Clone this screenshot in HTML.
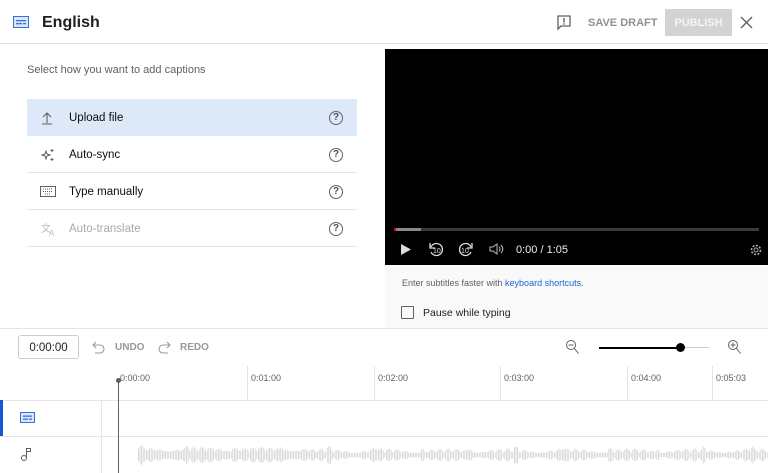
<!DOCTYPE html>
<html><head><meta charset="utf-8"><style>
*{box-sizing:border-box;margin:0;padding:0}
body{width:768px;height:473px;overflow:hidden;background:#fff;font-family:"Liberation Sans",sans-serif;position:relative;color:#0d0d0d}
.abs{position:absolute}
.hdr{left:0;top:0;width:768px;height:44px;border-bottom:1px solid #e0e0e0}
.title{left:42px;top:14px;font-size:16px;font-weight:bold;color:#202020}
.sub{left:27px;top:64px;font-size:11px;color:#606060}
.row{left:27px;width:330px;height:37px;border-bottom:1px solid #e5e5e5;font-size:11.5px}
.row span{position:absolute;left:42px;top:13px}
.q{position:absolute;left:302px;top:12px;width:14px;height:14px;border:1.3px solid #606060;border-radius:50%;font-size:10px;text-align:center;line-height:12px;color:#505050;font-weight:bold}
.ic{position:absolute;left:14px;top:12px}
.video{left:385px;top:49px;width:383px;height:216px;background:#000}
.panel{left:385px;top:265px;width:383px;height:63px;background:#f9f9f9}
.tb{left:0;top:328px;width:768px;border-top:1px solid #e5e5e5}
.tick{position:absolute;top:366px;height:34px;border-left:1px solid #e5e5e5;font-size:9px;color:#606060;padding-left:3px;padding-top:7px}
</style></head><body>
<div class="abs hdr"></div>
<svg class="abs" style="left:13px;top:16px" width="16" height="12"><rect x="0.5" y="0.5" width="15" height="11" fill="#dbe6fb" stroke="#3a6fd8"/><rect x="3" y="4" width="10" height="1.3" fill="#3a6fd8"/><rect x="3" y="7" width="6" height="1.3" fill="#3a6fd8"/><rect x="10" y="7" width="3" height="1.3" fill="#3a6fd8"/></svg>
<div class="abs title">English</div>
<svg class="abs" style="left:557px;top:15px" width="14" height="16"><path d="M1 1h12v10H4l-3 3z" fill="none" stroke="#606060" stroke-width="1.3"/><rect x="6.3" y="3" width="1.4" height="4.5" fill="#606060"/><rect x="6.3" y="8.3" width="1.4" height="1.4" fill="#606060"/></svg>
<div class="abs" style="left:588px;top:17px;font-size:11px;font-weight:bold;color:#909090">SAVE DRAFT</div>
<div class="abs" style="left:665px;top:9px;width:67px;height:27px;background:#d3d3d3;color:#f4f4f4;font-size:11px;font-weight:bold;text-align:center;line-height:28px">PUBLISH</div>
<svg class="abs" style="left:740px;top:16px" width="13" height="13"><path d="M1 1l11 11M12 1L1 12" stroke="#606060" stroke-width="1.4"/></svg>

<div class="abs sub">Select how you want to add captions</div>
<div class="abs row" style="top:99px;background:#dde8f9;border-bottom-color:#dde8f9"><svg class="ic" width="12" height="14"><path d="M6 12V2M2 6l4-4 4 4M1 13h10" fill="none" stroke="#606060" stroke-width="1.1"/></svg><span>Upload file</span><div class="q">?</div></div>
<div class="abs row" style="top:136px"><svg class="ic" width="14" height="14"><path d="M5 3l1 3 3 1-3 1-1 3-1-3-3-1 3-1zM11 1v3M9.5 2.5h3M11 10v3M9.5 11.5h3" fill="none" stroke="#606060" stroke-width="1"/></svg><span>Auto-sync</span><div class="q">?</div></div>
<div class="abs row" style="top:173px"><svg class="ic" width="16" height="12" style="left:13px;top:13px"><rect x="0.5" y="0.5" width="15" height="10" fill="none" stroke="#606060"/><path d="M3 3h10M3 5.5h10M5 8h6" stroke="#606060" stroke-dasharray="1 1"/></svg><span>Type manually</span><div class="q">?</div></div>
<div class="abs row" style="top:210px"><svg class="ic" width="16" height="14"><text x="0" y="10" font-size="10" fill="#bbb" font-family="Liberation Sans">文</text><text x="8" y="14" font-size="8" fill="#bbb" font-family="Liberation Sans">A</text></svg><span style="color:#aaa">Auto-translate</span><div class="q">?</div></div>

<div class="abs video"></div>
<div class="abs" style="left:394px;top:228px;width:365px;height:3px;background:#3a3a3a"></div>
<div class="abs" style="left:394px;top:228px;width:27px;height:3px;background:#888"></div>
<div class="abs" style="left:394px;top:228px;width:2px;height:3px;background:#e00"></div>
<svg class="abs" style="left:400px;top:243px" width="12" height="13"><path d="M1 1l10 5.5L1 12z" fill="#ddd"/></svg>
<svg class="abs" style="left:428px;top:241px" width="16" height="16"><path d="M3 6a6 6 0 1 1 0 5" fill="none" stroke="#ddd" stroke-width="1.3"/><path d="M2 2v5h5" fill="none" stroke="#ddd" stroke-width="1.3"/><text x="5" y="12" font-size="7" fill="#ddd" font-family="Liberation Sans">10</text></svg>
<svg class="abs" style="left:458px;top:241px" width="16" height="16"><path d="M13 6a6 6 0 1 0 0 5" fill="none" stroke="#ddd" stroke-width="1.3"/><path d="M14 2v5H9" fill="none" stroke="#ddd" stroke-width="1.3"/><text x="3" y="12" font-size="7" fill="#ddd" font-family="Liberation Sans">10</text></svg>
<svg class="abs" style="left:489px;top:242px" width="16" height="14"><path d="M1 5h3l4-3v10L4 9H1z" fill="none" stroke="#bbb"/><path d="M10 4.5q2 2.5 0 5M12 3q3.5 4 0 8" fill="none" stroke="#bbb"/></svg>
<div class="abs" style="left:516px;top:244px;font-size:11px;color:#eee">0:00 / 1:05</div>
<svg class="abs" style="left:749px;top:243px" width="14" height="14"><circle cx="7" cy="7" r="4.5" fill="none" stroke="#aaa" stroke-width="1.6" stroke-dasharray="2 1.5"/><circle cx="7" cy="7" r="2" fill="none" stroke="#aaa"/></svg>

<div class="abs panel"></div>
<div class="abs" style="left:402px;top:278px;font-size:9px;color:#606060">Enter subtitles faster with <span style="color:#1a66d8">keyboard shortcuts</span>.</div>
<div class="abs" style="left:401px;top:306px;width:13px;height:13px;border:1.5px solid #606060;border-radius:1px"></div>
<div class="abs" style="left:423px;top:307px;font-size:10.5px;color:#202020">Pause while typing</div>

<div class="abs tb"></div>
<div class="abs" style="left:18px;top:335px;width:61px;height:24px;border:1px solid #ccc;border-radius:3px;font-size:11.5px;text-align:center;line-height:24px;color:#202020">0:00:00</div>
<svg class="abs" style="left:92px;top:340px" width="14" height="14"><path d="M4 2L1 5l3 3M1 5h7a4 4 0 0 1 0 8H3" fill="none" stroke="#999" stroke-width="1.1"/></svg>
<div class="abs" style="left:115px;top:342px;font-size:10px;font-weight:bold;color:#999">UNDO</div>
<svg class="abs" style="left:157px;top:340px" width="14" height="14"><path d="M10 2l3 3-3 3M13 5H6a4 4 0 0 0 0 8h5" fill="none" stroke="#999" stroke-width="1.1"/></svg>
<div class="abs" style="left:180px;top:342px;font-size:10px;font-weight:bold;color:#999">REDO</div>
<svg class="abs" style="left:565px;top:339px" width="15" height="16"><circle cx="6" cy="6" r="4.5" fill="none" stroke="#606060"/><path d="M3.5 6h5M9.5 9.5l4 5" stroke="#606060"/></svg>
<div class="abs" style="left:599px;top:347px;width:82px;height:1.5px;background:#000"></div>
<div class="abs" style="left:681px;top:347px;width:28px;height:1px;background:#ccc"></div>
<div class="abs" style="left:676px;top:343px;width:9px;height:9px;border-radius:50%;background:#000"></div>
<svg class="abs" style="left:727px;top:339px" width="15" height="16"><circle cx="6" cy="6" r="4.5" fill="none" stroke="#606060"/><path d="M3.5 6h5M6 3.5v5M9.5 9.5l4 5" stroke="#606060"/></svg>

<div class="tick" style="left:247px">0:01:00</div>
<div class="tick" style="left:374px">0:02:00</div>
<div class="tick" style="left:500px">0:03:00</div>
<div class="tick" style="left:627px">0:04:00</div>
<div class="tick" style="left:712px">0:05:03</div>
<div class="abs" style="left:120px;top:373px;font-size:9px;color:#606060">0:00:00</div>
<div class="abs" style="left:0;top:400px;width:768px;border-top:1px solid #e5e5e5"></div>
<div class="abs" style="left:0;top:436px;width:768px;border-top:1px solid #e5e5e5"></div>
<div class="abs" style="left:101px;top:400px;height:73px;border-left:1px solid #e5e5e5"></div>
<div class="abs" style="left:0;top:400px;width:3px;height:36px;background:#1a55d6"></div>
<svg class="abs" style="left:20px;top:412px" width="15" height="11"><rect x="0.5" y="0.5" width="14" height="10" fill="#dbe6fb" stroke="#3a6fd8"/><rect x="3" y="3.5" width="9" height="1.3" fill="#3a6fd8"/><rect x="3" y="6.5" width="5" height="1.3" fill="#3a6fd8"/><rect x="9" y="6.5" width="3" height="1.3" fill="#3a6fd8"/></svg>
<svg class="abs" style="left:20px;top:447px" width="12" height="15"><circle cx="4" cy="11" r="2.5" fill="none" stroke="#606060"/><path d="M6.5 11V1.5h4v3h-4" fill="none" stroke="#606060"/></svg>
<svg id="wf" class="abs" style="left:138px;top:440px" width="630" height="30"></svg>
<div class="abs" style="left:118px;top:380px;height:93px;border-left:1.3px solid #606060"></div>
<div class="abs" style="left:116px;top:378px;width:5px;height:5px;border-radius:50%;background:#606060"></div>
<script>
var s='',w=document.getElementById('wf');
for(var x=0;x<630;x+=1.6){var h=4+Math.abs(Math.sin(x*0.37)*Math.cos(x*0.051))*9+(x%47<4?5:0);if(x<170)h+=3;s+='<rect x="'+x.toFixed(1)+'" y="'+(15-h/2).toFixed(1)+'" width="0.8" height="'+h.toFixed(1)+'" fill="#cfcfcf"/>';}
w.innerHTML=s;
</script>
</body></html>
